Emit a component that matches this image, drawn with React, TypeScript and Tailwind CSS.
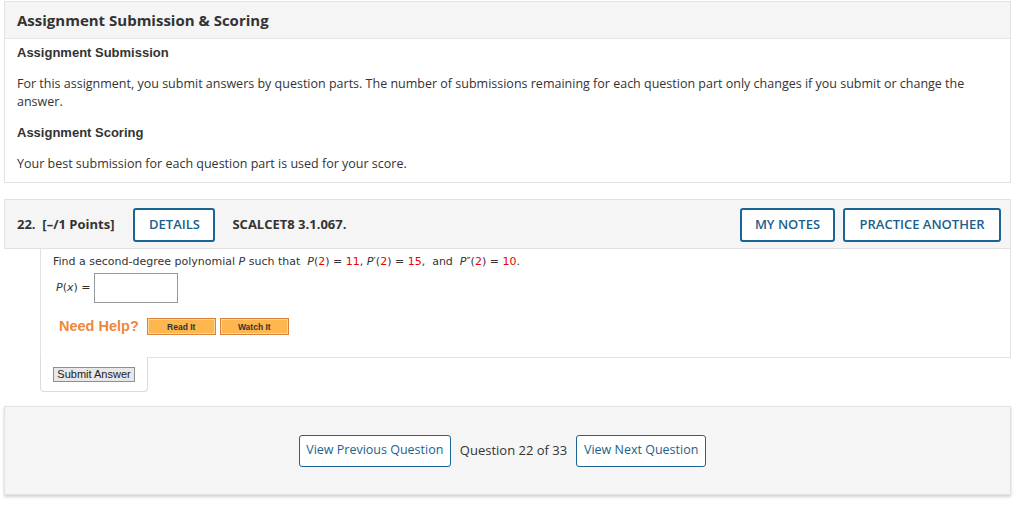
import React from 'react';

const openSans = { fontFamily: '"Open Sans", "Liberation Sans", sans-serif' };

function BlueButton({ children, className = '' }: { children: React.ReactNode; className?: string }) {
    return (
        <button className={`border-2 border-[#1b6594] rounded-[3px] text-[#1b5f8c] bg-white ${className}`}>
            {children}
        </button>
    );
}

function Red({ children }: { children: React.ReactNode }) {
    return <span className="text-[#ee0000]">{children}</span>;
}

export default function App() {
    return (
        <div className="w-[1024px] h-[510px] bg-white overflow-hidden text-[#333]" style={openSans}>
            {/* submission & scoring */}
            <div className="ml-[4px] w-[1007px] mt-[1px] border border-[#e2e2e2]">
                <div className="h-[37px] bg-[#f5f5f5] border-b border-[#e6e6e6] flex items-center px-[12px]">
                    <h1 className="text-[15px] font-bold text-[#333]">Assignment Submission &amp; Scoring</h1>
                </div>
                <div className="px-[12px] pb-[9px]">
                    <h2 className="font-['Liberation_Sans',Arial,sans-serif] font-bold text-[13px] text-[#333] mt-[6px] leading-[16px]">
                        Assignment Submission
                    </h2>
                    <p className="text-[12.5px] leading-[18px] mt-[14px] pr-[20px]">
                        For this assignment, you submit answers by question parts. The number of submissions remaining for each question part only changes if you submit or change the answer.
                    </p>
                    <h2 className="font-['Liberation_Sans',Arial,sans-serif] font-bold text-[13px] text-[#333] mt-[14px] leading-[16px]">
                        Assignment Scoring
                    </h2>
                    <p className="text-[12.5px] leading-[18px] mt-[14px]">
                        Your best submission for each question part is used for your score.
                    </p>
                </div>
            </div>

            {/* question */}
            <div className="mt-[16px]">
                <div className="ml-[4px] w-[1007px] h-[50px] bg-[#f5f5f5] border border-[#e2e2e2] flex items-center px-[12px] pt-[1px]">
                    <span className="text-[13px] font-bold">22.&nbsp; [–/1 Points]</span>
                    <BlueButton className="ml-[19px] w-[82px] h-[34px] text-[13px] font-semibold">DETAILS</BlueButton>
                    <span className="ml-[17px] text-[13px] font-bold">SCALCET8 3.1.067.</span>
                    <div className="ml-auto flex gap-[8px] mr-[-3px]">
                        <BlueButton className="w-[95px] h-[34px] text-[13px] font-semibold">MY NOTES</BlueButton>
                        <BlueButton className="w-[158px] h-[34px] text-[13px] font-semibold">PRACTICE ANOTHER</BlueButton>
                    </div>
                </div>
                <div className="ml-[40px] w-[971px] h-[109px] border-l border-r border-b border-[#e2e2e2] px-[12px] pt-[5px] font-['DejaVu_Sans',Verdana,sans-serif] text-[11px] text-[#333]">
                    <div className="leading-[16px]">
                        Find a second-degree polynomial <i>P</i> such that&nbsp; <i>P</i>(<Red>2</Red>) = <Red>11</Red>, <i>P</i>′(<Red>2</Red>) = <Red>15</Red>,&nbsp; and&nbsp; <i>P</i>″(<Red>2</Red>) = <Red>10</Red>.
                    </div>
                    <div className="flex items-center mt-[3px] ml-[3px]">
                        <span><i>P</i>(<i>x</i>) =</span>
                        <div className="ml-[4px] w-[84px] h-[30px] border border-[#999] bg-white" />
                    </div>
                    <div className="flex items-center mt-[13px] ml-[6px] font-['Liberation_Sans',Arial,sans-serif]">
                        <span className="text-[#f0873a] font-bold text-[14.5px]">Need Help?</span>
                        <button className="ml-[8px] w-[69px] h-[17px] bg-[#fdb74e] border border-[#d9823a] shadow-[inset_0_0_0_1px_#fcd79a] text-[8.5px] font-bold text-[#333] leading-none">Read It</button>
                        <button className="ml-[4px] w-[69px] h-[17px] bg-[#fdb74e] border border-[#d9823a] shadow-[inset_0_0_0_1px_#fcd79a] text-[8.5px] font-bold text-[#333] leading-none">Watch It</button>
                    </div>
                </div>
                <div className="ml-[40px] w-[108px] h-[35px] -mt-[1px] bg-white border-l border-r border-b border-[#dcdcdc] rounded-b-[4px] flex items-center pl-[12px]">
                    <button className="w-[82px] h-[15px] bg-[#e8e8e8] border border-[#8e8e8e] font-['Liberation_Sans',Arial,sans-serif] text-[11px] leading-none text-[#222]">Submit Answer</button>
                </div>
            </div>

            {/* navigation */}
            <div className="ml-[4px] w-[1007px] mt-[14px] h-[89px] bg-[#f5f5f5] border border-[#e2e2e2] shadow-[0_2px_3px_rgba(0,0,0,0.18)] flex items-center justify-center pr-[10px]">
                <BlueButton className="w-[152px] h-[32px] text-[12.5px] border-[1.5px]">View Previous Question</BlueButton>
                <span className="mx-[9px] text-[13px] text-[#333]">Question 22 of 33</span>
                <BlueButton className="w-[130px] h-[32px] text-[12.5px] border-[1.5px]">View Next Question</BlueButton>
            </div>
        </div>
    );
}
